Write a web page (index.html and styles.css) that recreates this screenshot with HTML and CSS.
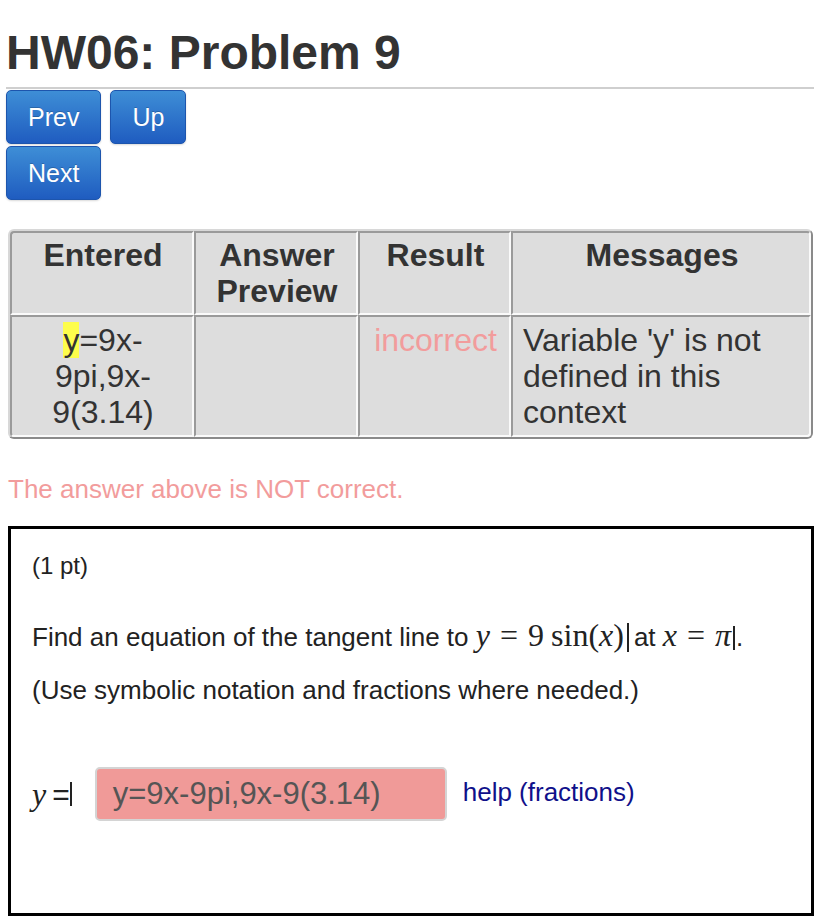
FILE: index.html
```html
<!DOCTYPE html>
<html>
<head>
<meta charset="utf-8">
<title>HW06: Problem 9</title>
<link rel="stylesheet" href="styles.css">
</head>
<body>
<div class="page">
  <h1 class="title">HW06: Problem 9</h1>
  <div class="nav">
    <a class="btn">Prev</a>
    <a class="btn">Up</a>
    <a class="btn">Next</a>
  </div>

  <table class="results">
    <colgroup>
      <col class="c1"><col class="c2"><col class="c3"><col class="c4">
    </colgroup>
    <thead>
      <tr>
        <th>Entered</th>
        <th>Answer Preview</th>
        <th>Result</th>
        <th>Messages</th>
      </tr>
    </thead>
    <tbody>
      <tr>
        <td class="center"><span class="hl">y</span>=9x-9pi,9x-9(3.14)</td>
        <td></td>
        <td class="center incorrect">incorrect</td>
        <td class="msg">Variable 'y' is not defined in this context</td>
      </tr>
    </tbody>
  </table>

  <p class="warning">The answer above is NOT correct.</p>

  <div class="problem">
    <p class="pts">(1 pt)</p>
    <p class="text">Find an equation of the tangent line to <span class="math"><i>y</i><span class="op">=</span>9<span class="fn">sin</span>(<i>x</i>)</span><span class="caret"></span>at <span class="math"><i>x</i><span class="op">=</span><i>π</i></span><span class="caret short"></span>.</p>
    <p class="text">(Use symbolic notation and fractions where needed.)</p>
    <div class="answer">
      <span class="math lhs"><i>y</i><span class="op">=</span></span><span class="caret short"></span>
      <span class="input">y=9x-9pi,9x-9(3.14)</span>
      <a class="help">help (fractions)</a>
    </div>
  </div>
</div>
</body>
</html>
```

FILE: styles.css
```css
html, body {
  margin: 0;
  padding: 0;
  background: #fff;
}
body {
  font-family: "Liberation Sans", Arial, Helvetica, sans-serif;
  color: #333;
}
.page {
  padding: 0 14px 0 6px;
}
.title {
  margin: 26px 0 0 0;
  padding: 0 0 8px 0;
  font-size: 48px;
  line-height: 53px;
  font-weight: bold;
  color: #333;
  border-bottom: 2px solid #cfcfcf;
}
.nav {
  display: flex;
  flex-wrap: wrap;
  width: 190px;
  column-gap: 9px;
  row-gap: 2px;
  margin-top: 1px;
}
.btn {
  display: inline-flex;
  align-items: center;
  justify-content: center;
  height: 54px;
  box-sizing: border-box;
  padding: 0 21px;
  font-size: 25px;
  color: #fff;
  background: linear-gradient(#3e8ed6, #1f5cc0);
  border: 1px solid #1d55ad;
  border-radius: 5px;
  box-shadow: 0 1px 2px rgba(0,0,0,0.15);
  text-shadow: 0 -1px 0 rgba(0,0,0,0.2);
}
.results {
  margin: 29px 0 0 2px;
  width: 805px;
  table-layout: fixed;
  border-collapse: separate;
  border-spacing: 0;
  border: 2px solid;
  border-color: #d8d8d8 #8a8a8a #8a8a8a #d8d8d8;
  border-radius: 6px;
  background: #ddd;
  font-size: 32px;
  line-height: 36px;
}
.c1 { width: 184px; }
.c2 { width: 164px; }
.c3 { width: 153px; }
.c4 { width: 300px; }
.results th, .results td {
  background: #ddd;
  border: 2px solid;
  border-color: #9a9a9a #fafafa #fafafa #9a9a9a;
  padding: 4px 8px 4px 10px;
  vertical-align: top;
  color: #333;
}
.results th {
  font-weight: bold;
  text-align: center;
}
.results tbody td {
  padding-top: 5px;
  padding-bottom: 5px;
}
.results th:first-child { border-top-left-radius: 4px; }
.results th:last-child { border-top-right-radius: 4px; }
.results td:first-child { border-bottom-left-radius: 4px; }
.results td:last-child { border-bottom-right-radius: 4px; }
.results td.center { text-align: center; }
.results td.incorrect { color: #f29c9c; }
.results td.msg { text-align: left; }
.hl { background: #fdfd4c; }
.warning {
  margin: 35px 0 0 2px;
  font-size: 26px;
  line-height: 30px;
  color: #f29c9c;
}
.problem {
  margin: 22px 0 0 2px;
  border: 3px solid #000;
  padding: 22px 21px 92px 21px;
  color: #222;
}
.pts {
  margin: 0;
  font-size: 24px;
  line-height: 30px;
}
.text {
  margin: 36px 0 0 0;
  font-size: 26px;
  line-height: 36px;
}
.text + .text {
  margin-top: 17px;
}
.math {
  font-family: "Liberation Serif", "Times New Roman", serif;
  font-size: 32px;
  line-height: 36px;
  color: #222;
}
.math i { font-style: italic; }
.math .op { margin: 0 10px; }
.math .fn { margin-left: 7px; }
.caret {
  display: inline-block;
  width: 2px;
  height: 29px;
  background: #222;
  vertical-align: -6px;
  margin: 0 5px 0 3px;
}
.caret.short {
  height: 24px;
  width: 2px;
  margin: 0 1px 0 2px;
  vertical-align: -4px;
}
.answer {
  display: flex;
  align-items: center;
  margin-top: 59px;
}
.answer .lhs .op {
  margin: 0 0 0 6px;
  font-family: "Liberation Sans", Arial, sans-serif;
  font-size: 30px;
}
.answer .caret.short {
  margin-left: 0;
}
.input {
  display: inline-flex;
  align-items: center;
  box-sizing: border-box;
  width: 352px;
  height: 54px;
  margin-left: 22px;
  padding: 0 16px;
  background: #f09a98;
  border: 2px solid #d4d4d4;
  border-radius: 5px;
  font-size: 31px;
  color: #555;
}
.help {
  margin-left: 16px;
  font-size: 26px;
  color: #10108a;
  margin-top: -4px;
}
```
